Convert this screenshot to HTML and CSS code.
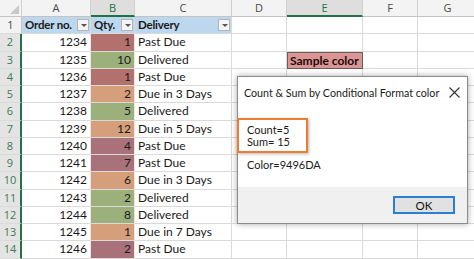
FILE: index.html
```html
<html>
  <head>
    <meta name="viewport" content="width=device-width,initial-scale=1">
    <link rel="stylesheet" href="styles.css">
  </head>
  <body>
    <div class="sheet">
      <div class="row colhead">
        <div class="corner"></div>
        <div>A</div>
        <div class="sel">B</div>
        <div>C</div>
        <div>D</div>
        <div class="sel">E</div>
        <div>F</div>
        <div>G</div>
      </div>

      <div class="row">
        <div class="rh">1</div>
        <div class="th">Order no.<span class="filter"></span></div>
        <div class="th">Qty.<span class="filter"></span></div>
        <div class="th">Delivery<span class="filter"></span></div>
        <div></div><div></div><div></div><div></div>
      </div>
      <div class="row">
        <div class="rh on">2</div>
        <div class="num">1234</div>
        <div class="num q past">1</div>
        <div>Past Due</div>
        <div></div><div></div><div></div><div></div>
      </div>
      <div class="row">
        <div class="rh on">3</div>
        <div class="num">1235</div>
        <div class="num q done">10</div>
        <div>Delivered</div>
        <div></div>
        <div class="sample">Sample color</div>
        <div></div><div></div>
      </div>
      <div class="row">
        <div class="rh on">4</div>
        <div class="num">1236</div>
        <div class="num q past">1</div>
        <div>Past Due</div>
        <div></div><div></div><div></div><div></div>
      </div>
      <div class="row">
        <div class="rh on">5</div>
        <div class="num">1237</div>
        <div class="num q due">2</div>
        <div>Due in 3 Days</div>
        <div></div><div></div><div></div><div></div>
      </div>
      <div class="row">
        <div class="rh on">6</div>
        <div class="num">1238</div>
        <div class="num q done">5</div>
        <div>Delivered</div>
        <div></div><div></div><div></div><div></div>
      </div>
      <div class="row">
        <div class="rh on">7</div>
        <div class="num">1239</div>
        <div class="num q due">12</div>
        <div>Due in 5 Days</div>
        <div></div><div></div><div></div><div></div>
      </div>
      <div class="row">
        <div class="rh on">8</div>
        <div class="num">1240</div>
        <div class="num q late">4</div>
        <div>Past Due</div>
        <div></div><div></div><div></div><div></div>
      </div>
      <div class="row">
        <div class="rh on">9</div>
        <div class="num">1241</div>
        <div class="num q late">7</div>
        <div>Past Due</div>
        <div></div><div></div><div></div><div></div>
      </div>
      <div class="row">
        <div class="rh on">10</div>
        <div class="num">1242</div>
        <div class="num q due">6</div>
        <div>Due in 3 Days</div>
        <div></div><div></div><div></div><div></div>
      </div>
      <div class="row">
        <div class="rh on">11</div>
        <div class="num">1243</div>
        <div class="num q done">2</div>
        <div>Delivered</div>
        <div></div><div></div><div></div><div></div>
      </div>
      <div class="row">
        <div class="rh on">12</div>
        <div class="num">1244</div>
        <div class="num q done">8</div>
        <div>Delivered</div>
        <div></div><div></div><div></div><div></div>
      </div>
      <div class="row">
        <div class="rh on">13</div>
        <div class="num">1245</div>
        <div class="num q due">1</div>
        <div>Due in 7 Days</div>
        <div></div><div></div><div></div><div></div>
      </div>
      <div class="row">
        <div class="rh on">14</div>
        <div class="num">1246</div>
        <div class="num q late">2</div>
        <div>Past Due</div>
        <div></div><div></div><div></div><div></div>
      </div>
    </div>

    <!-- message box over the sheet -->
    <div class="dialog">
      <div class="dlg_title">
        <span>Count &amp; Sum by Conditional Format color</span>
        <svg class="close" width="11" height="11" viewBox="0 0 11 11">
          <path d="M0.5 0.5 L10.5 10.5 M10.5 0.5 L0.5 10.5" stroke="#333" stroke-width="1.1" fill="none"/>
        </svg>
      </div>
      <div class="dlg_body">
        <div>Count=5</div>
        <div>Sum= 15</div>
        <div>&nbsp;</div>
        <div>Color=9496DA</div>
      </div>
      <div class="dlg_foot">
        <button class="ok">OK</button>
      </div>
      <div class="mark"></div>
    </div>
  </body>
</html>
```

FILE: styles.css
```css
body {
    margin: 0;
    overflow: hidden;
    background: #fff;
    font-family: 'Lato', sans-serif;
    font-size: 12px;
    color: #1a1a1a;
}
.sheet {
    width: 474px;
}
.row {
    display: grid;
    grid-template-columns: 22px 69px 44px 97px 55px 76px 55px 60px;
    height: 17.25px;
}
.row > div {
    box-sizing: border-box;
    border-right: 1px solid #dadada;
    border-bottom: 1px solid #dadada;
    padding: 0 3px;
    line-height: 16px;
    white-space: nowrap;
    overflow: hidden;
    position: relative;
}

/* column letters */
.colhead {
    height: 17px;
}
.colhead > div {
    background: #f3f3f3;
    color: #4a4a4a;
    text-align: center;
    font-family: 'Open Sans', sans-serif;
    font-size: 11px;
    border-right: 1px solid #d0d0d0;
    border-bottom: 1px solid #c4c4c4;
}
.colhead > .sel {
    background: #dedede;
    color: #217346;
    border-bottom: 2px solid #217346;
}
.colhead > .corner {
    background: #f3f3f3;
}
.corner::after {
    content: "";
    position: absolute;
    right: 2px;
    bottom: 2px;
    border-left: 9px solid transparent;
    border-bottom: 9px solid #c9c9c9;
}

/* row numbers */
.row > .rh {
    background: #f3f3f3;
    color: #4a4a4a;
    text-align: center;
    padding: 0;
    font-family: 'Open Sans', sans-serif;
    font-size: 11px;
    border-right: 1px solid #c4c4c4;
}
.row > .rh.on {
    background: #e4e4e4;
    color: #3f7a58;
    border-right: 2px solid #217346;
}

/* table header row */
.row > .th {
    background: #bdd7ee;
    font-weight: bold;
    font-size: 11.5px;
    letter-spacing: -0.2px;
    padding-right: 16px;
}
.filter {
    position: absolute;
    right: 1px;
    top: 2px;
    width: 12px;
    height: 12px;
    box-sizing: border-box;
    border: 1px solid #b5b5b5;
    background: #f4f4f4;
}
.filter::after {
    content: "";
    position: absolute;
    left: 3px;
    top: 4px;
    border-left: 3px solid transparent;
    border-right: 3px solid transparent;
    border-top: 3px solid #555;
}

.num {
    text-align: right;
}
.row > .q {
    border-left: 1px solid #efe4e4;
    border-right: 1px solid #efe4e4;
    margin-left: -1px;
}
.past {
    background: #b3716d;
}
.late {
    background: #a9717a;
}
.done {
    background: #9bb07b;
}
.due {
    background: #d59f7b;
}
.row > .sample {
    background: #da9694;
    font-weight: bold;
    color: #1a0a0a;
    border: 1px solid #6b5a5a;
    padding: 0 2px;
    line-height: 15px;
}

/* message box */
.dialog {
    position: absolute;
    left: 237px;
    top: 76px;
    width: 231px;
    height: 148px;
    box-sizing: border-box;
    border: 1px solid #8c8c8c;
    background: #fff;
    box-shadow: 0 0 6px rgba(0, 0, 0, 0.35);
    display: flex;
    flex-direction: column;
    font-family: 'Lato', sans-serif;
    font-size: 10.7px;
    color: #1a1a1a;
}
.dlg_title {
    height: 30px;
    display: flex;
    align-items: center;
    justify-content: space-between;
    padding: 0 7px 0 6px;
    white-space: nowrap;
}
.dlg_body {
    flex: 1;
    padding: 17px 0 0 9px;
    line-height: 11.5px;
    font-size: 11px;
}
.dlg_foot {
    height: 36px;
    background: #f0f0f0;
    display: flex;
    justify-content: flex-end;
    align-items: flex-start;
    padding: 9px 12px 0 0;
    box-sizing: border-box;
}
.ok {
    width: 62px;
    height: 18px;
    border: 2px solid #2a7fd4;
    background: #e1e1e1;
    font-family: 'Lato', sans-serif;
    font-size: 11.5px;
    color: #111;
    padding: 0;
}
.mark {
    position: absolute;
    left: -1px;
    top: 41px;
    width: 71px;
    height: 35px;
    box-sizing: border-box;
    border: 2px solid #ed7d31;
    box-shadow: 1px 1px 3px rgba(0, 0, 0, 0.3);
}
```
